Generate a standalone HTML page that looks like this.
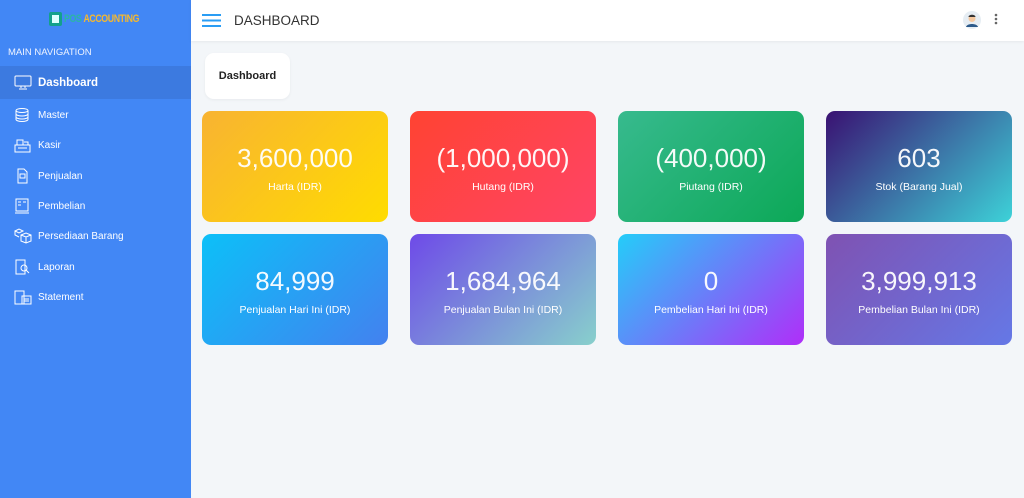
<!DOCTYPE html>
<html><head><meta charset="utf-8"><style>
*{box-sizing:border-box;margin:0;padding:0}
body{width:1024px;height:498px;overflow:hidden;font-family:"Liberation Sans",sans-serif;background:#f3f6f9;position:relative}
.sb{position:absolute;left:0;top:0;width:191px;height:498px;background:#4287f5;color:#fff}
.logo{position:absolute;left:49px;top:12px;display:flex;align-items:center;gap:2px}
.logo .ic{width:13px;height:14px;background:#13a08c;border-radius:2px;position:relative}
.logo .ic:after{content:"";position:absolute;left:3px;top:3px;width:7px;height:8px;background:#dff}
.logo span{font-size:11px;font-weight:bold;letter-spacing:-0.5px;transform:scaleX(.8);transform-origin:left;white-space:nowrap}
.mn{position:absolute;left:8px;top:47px;font-size:9.5px;color:#f0f4ff}
.item{position:absolute;left:0;width:191px;height:30px;display:flex;align-items:center;font-size:10px}
.item svg{position:absolute;left:14px}
.item span{position:absolute;left:38px}
.act{background:#3c7ae0;height:33px}
.act span{font-weight:bold;font-size:11.5px}
.hd{position:absolute;left:191px;top:0;right:0;height:41px;background:#fff;box-shadow:0 1px 3px rgba(0,0,0,.06)}
.hd .t{position:absolute;left:43px;top:13px;font-size:13.5px;color:#333}
.bc{position:absolute;left:205px;top:53px;width:85px;height:46px;background:#fff;border-radius:9px;font-size:11px;font-weight:bold;color:#222;display:flex;align-items:center;justify-content:center;box-shadow:0 1px 3px rgba(0,0,0,.05)}
.c{position:absolute;width:186px;height:111px;border-radius:9px;color:#fff;text-align:center}
.c .n{position:absolute;left:0;right:0;top:32px;font-size:26px;font-weight:300;opacity:.95}
.c .l{position:absolute;left:0;right:0;top:70px;font-size:10.5px}
</style></head><body>
<div class="sb">
<div class="logo"><div class="ic"></div><span><b style="color:#2bb6a5">POS</b> <b style="color:#f5b82e">ACCOUNTING</b></span></div>
<div class="mn">MAIN NAVIGATION</div>
<div class="item act" style="top:66px"><svg width="18" height="15" viewBox="0 0 18 15" fill="none" stroke="#fff" stroke-width="1"><rect x="1" y="1" width="16" height="10" rx="1"/><path d="M7 11v2M11 11v2M5 14h8"/></svg><span>Dashboard</span></div>
<div class="item" style="top:100px"><svg width="16" height="16" viewBox="0 0 16 16" fill="none" stroke="#fff" stroke-width="1"><ellipse cx="8" cy="3.5" rx="6" ry="2"/><path d="M2 3.5v9c0 1 2.7 2 6 2s6-1 6-2v-9M2 7c0 1 2.7 2 6 2s6-1 6-2M2 10c0 1 2.7 2 6 2s6-1 6-2"/></svg><span>Master</span></div>
<div class="item" style="top:130px"><svg width="17" height="15" viewBox="0 0 17 15" fill="none" stroke="#fff" stroke-width="1"><rect x="1" y="7" width="15" height="7"/><path d="M3 7V2h6v5M10 4h4v3M4 10h9"/></svg><span>Kasir</span></div>
<div class="item" style="top:161px"><svg width="16" height="16" viewBox="0 0 16 16" fill="none" stroke="#fff" stroke-width="1"><path d="M4 1h6l3 3v11H4z"/><rect x="6" y="6" width="5" height="4"/></svg><span>Penjualan</span></div>
<div class="item" style="top:191px"><svg width="16" height="16" viewBox="0 0 16 16" fill="none" stroke="#fff" stroke-width="1"><rect x="2" y="1" width="12" height="12"/><path d="M4 4h3M4 7h3M9 4h3M1 15h14"/></svg><span>Pembelian</span></div>
<div class="item" style="top:221px"><svg width="18" height="16" viewBox="0 0 18 16" fill="none" stroke="#fff" stroke-width="1"><path d="M1 3l4-2 4 2-4 2zM1 3v4l4 2M7 7l5-2 5 2v6l-5 2-5-2zM7 7l5 2 5-2M12 9v6"/></svg><span>Persediaan Barang</span></div>
<div class="item" style="top:252px"><svg width="17" height="16" viewBox="0 0 17 16" fill="none" stroke="#fff" stroke-width="1"><path d="M2 1h9v14H2z"/><circle cx="10" cy="9" r="3"/><path d="M12 11l3 3"/></svg><span>Laporan</span></div>
<div class="item" style="top:282px"><svg width="18" height="16" viewBox="0 0 18 16" fill="none" stroke="#fff" stroke-width="1"><rect x="1" y="2" width="9" height="13"/><rect x="8" y="7" width="9" height="8"/><path d="M10 10h5M10 12h5"/></svg><span>Statement</span></div>
</div>
<div class="hd">
<svg style="position:absolute;left:11px;top:14px" width="19" height="13" viewBox="0 0 19 13"><path d="M0 1h19M0 6.5h19M0 12h19" stroke="#2a9df4" stroke-width="2"/></svg>
<div class="t">DASHBOARD</div>
<svg style="position:absolute;right:43px;top:11px" width="18" height="18" viewBox="0 0 18 18"><circle cx="9" cy="9" r="9" fill="#e6edf3"/><circle cx="9" cy="7.5" r="3.5" fill="#f6c9a0"/><path d="M5.5 6c0-3 7-3 7 0z" fill="#333"/><path d="M3 16c1-4 11-4 12 0z" fill="#2c5a8a"/></svg>
<svg style="position:absolute;right:26px;top:13px" width="4" height="12" viewBox="0 0 4 12"><circle cx="2" cy="2" r="1.3" fill="#666"/><circle cx="2" cy="6" r="1.3" fill="#666"/><circle cx="2" cy="10" r="1.3" fill="#666"/></svg>
</div>
<div class="bc">Dashboard</div>
<div class="c" style="left:202px;top:111px;background:linear-gradient(135deg,#f8b332,#ffdc00)"><div class="n">3,600,000</div><div class="l">Harta (IDR)</div></div>
<div class="c" style="left:410px;top:111px;background:linear-gradient(135deg,#ff4332,#ff4466)"><div class="n">(1,000,000)</div><div class="l">Hutang (IDR)</div></div>
<div class="c" style="left:618px;top:111px;background:linear-gradient(135deg,#37ba8e,#0ca857)"><div class="n">(400,000)</div><div class="l">Piutang (IDR)</div></div>
<div class="c" style="left:826px;top:111px;background:linear-gradient(135deg,#3a1172,#3dd2d8)"><div class="n">603</div><div class="l">Stok (Barang Jual)</div></div>
<div class="c" style="left:202px;top:234px;background:linear-gradient(135deg,#0cc0f8,#4381ef)"><div class="n">84,999</div><div class="l">Penjualan Hari Ini (IDR)</div></div>
<div class="c" style="left:410px;top:234px;background:linear-gradient(135deg,#6e4ae8,#88d0cc)"><div class="n">1,684,964</div><div class="l">Penjualan Bulan Ini (IDR)</div></div>
<div class="c" style="left:618px;top:234px;background:linear-gradient(135deg,#24cdf9,#b02ef9)"><div class="n">0</div><div class="l">Pembelian Hari Ini (IDR)</div></div>
<div class="c" style="left:826px;top:234px;background:linear-gradient(135deg,#7f52b2,#6578e6)"><div class="n">3,999,913</div><div class="l">Pembelian Bulan Ini (IDR)</div></div>
</body></html>
